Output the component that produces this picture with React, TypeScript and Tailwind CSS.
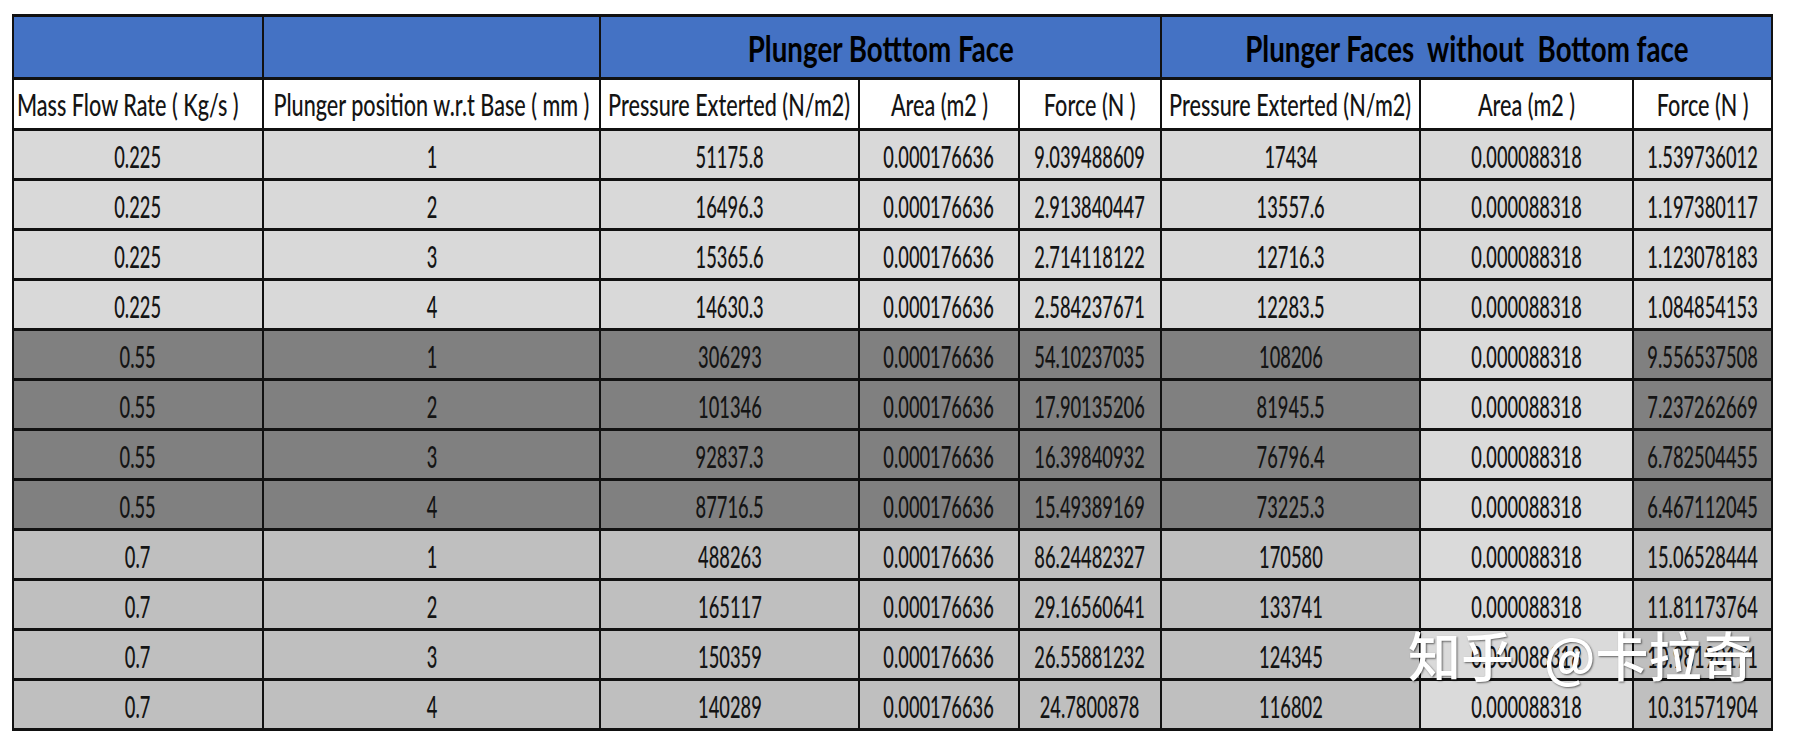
import React from "react";

type Row = string[];

const rows: Row[] = [
  ["0.225", "1", "51175.8", "0.000176636", "9.039488609", "17434", "0.000088318", "1.539736012"],
  ["0.225", "2", "16496.3", "0.000176636", "2.913840447", "13557.6", "0.000088318", "1.197380117"],
  ["0.225", "3", "15365.6", "0.000176636", "2.714118122", "12716.3", "0.000088318", "1.123078183"],
  ["0.225", "4", "14630.3", "0.000176636", "2.584237671", "12283.5", "0.000088318", "1.084854153"],
  ["0.55", "1", "306293", "0.000176636", "54.10237035", "108206", "0.000088318", "9.556537508"],
  ["0.55", "2", "101346", "0.000176636", "17.90135206", "81945.5", "0.000088318", "7.237262669"],
  ["0.55", "3", "92837.3", "0.000176636", "16.39840932", "76796.4", "0.000088318", "6.782504455"],
  ["0.55", "4", "87716.5", "0.000176636", "15.49389169", "73225.3", "0.000088318", "6.467112045"],
  ["0.7", "1", "488263", "0.000176636", "86.24482327", "170580", "0.000088318", "15.06528444"],
  ["0.7", "2", "165117", "0.000176636", "29.16560641", "133741", "0.000088318", "11.81173764"],
  ["0.7", "3", "150359", "0.000176636", "26.55881232", "124345", "0.000088318", "10.98190171"],
  ["0.7", "4", "140289", "0.000176636", "24.7800878", "116802", "0.000088318", "10.31571904"],
];

const subHeads = [
  "Mass Flow Rate ( Kg/s )",
  "Plunger position w.r.t Base ( mm )",
  "Pressure Exterted (N/m2)",
  "Area (m2 )",
  "Force (N )",
  "Pressure Exterted (N/m2)",
  "Area (m2 )",
  "Force (N )",
];

// shading follows the flow-rate blocks; the second "Area" column stays light
function cellBg(rowIndex: number, colIndex: number) {
  if (rowIndex < 4) return "bg-[#d9d9d9]";
  if (colIndex === 6) return "bg-[#dadada]";
  if (rowIndex < 8) return "bg-[#808080]";
  return "bg-[#bfbfbf]";
}

export default function App() {
  return (
    <div className="relative h-[741px] w-[1795px] overflow-hidden bg-white font-['Lato','Liberation_Sans',sans-serif] text-[#141414]">
      <div className="pl-[12px] pt-[14px]">
        <div className="inline-grid grid-cols-[248px_335px_257px_158px_140px_257px_211px_137px] gap-x-[2px] gap-y-[3px] bg-[#111] p-[2px] py-[3px]">
          <div className="h-[60px] bg-[#4472c4]" />
          <div className="h-[60px] bg-[#4472c4]" />
          <div className="col-span-3 flex h-[60px] items-center justify-center bg-[#4472c4] pt-[2px] text-black">
            <span className="inline-block scale-x-[0.77] whitespace-nowrap text-[36px] font-bold">Plunger Botttom Face</span>
          </div>
          <div className="col-span-3 flex h-[60px] items-center justify-center bg-[#4472c4] pt-[2px] text-black">
            <span className="inline-block scale-x-[0.77] whitespace-nowrap text-[36px] font-bold">
              Plunger Faces&nbsp; without&nbsp; Bottom face
            </span>
          </div>

          {subHeads.map((label, i) => (
            <div
              key={`h-${i}`}
              className={`flex h-[48px] items-center bg-white ${i === 0 ? "justify-start pl-[3px]" : "justify-center"}`}
            >
              <span
                className={`inline-block scale-x-[0.72] whitespace-nowrap text-[30px] font-medium ${
                  i === 0 ? "origin-left" : "origin-center"
                }`}
              >
                {label}
              </span>
            </div>
          ))}

          {rows.map((row, r) =>
            row.map((value, c) => (
              <div key={`${r}-${c}`} className={`flex h-[47px] items-center justify-center pt-[3px] ${cellBg(r, c)}`}>
                <span className="inline-block scale-x-[0.59] whitespace-nowrap text-[31px] font-medium">{value}</span>
              </div>
            ))
          )}
        </div>
      </div>

      <div className="pointer-events-none absolute left-[1408px] top-[628px] flex items-center gap-[30px] font-['Noto_Sans_CJK_SC',sans-serif] text-[53px] font-medium leading-none text-white [text-shadow:1px_1px_2px_rgba(0,0,0,0.55)]">
        <span>知乎</span>
        <span>@卡拉奇</span>
      </div>
    </div>
  );
}
